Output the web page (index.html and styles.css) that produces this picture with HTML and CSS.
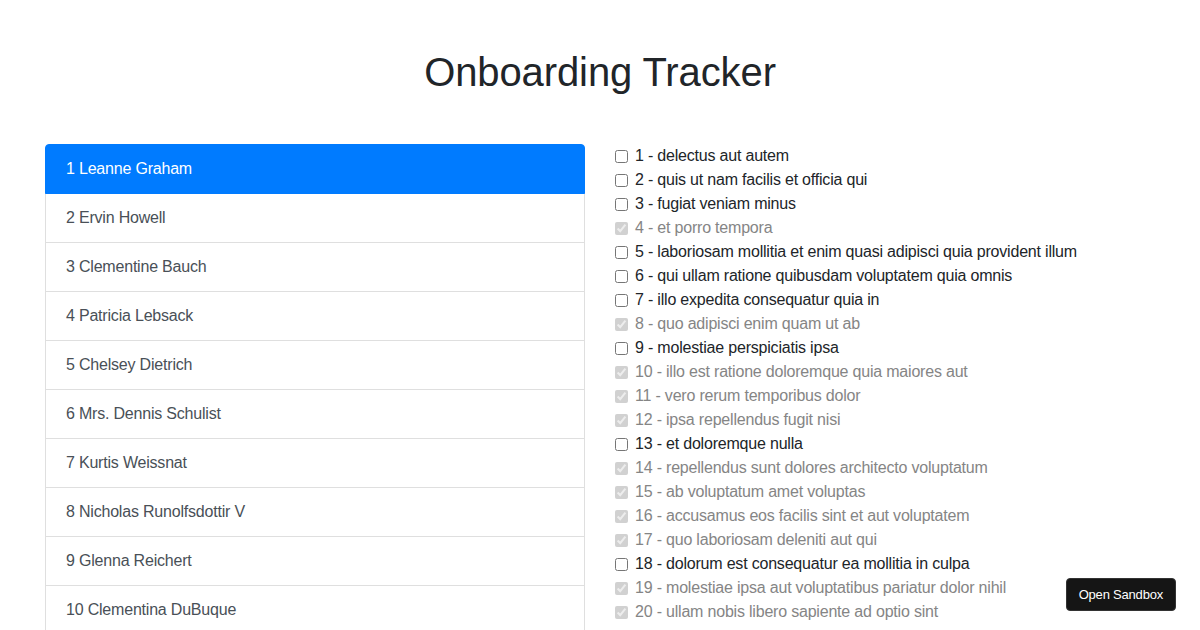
FILE: index.html
```html
<!DOCTYPE html>
<html>
<head>
<meta charset="utf-8">
<link rel="stylesheet" href="styles.css">
</head>
<body>
<div class="container">
  <h1 class="title">Onboarding Tracker</h1>
  <div class="row">
    <div class="col">
      <div class="list-group">
        <div class="item active">1 Leanne Graham</div>
        <div class="item">2 Ervin Howell</div>
        <div class="item">3 Clementine Bauch</div>
        <div class="item">4 Patricia Lebsack</div>
        <div class="item">5 Chelsey Dietrich</div>
        <div class="item">6 Mrs. Dennis Schulist</div>
        <div class="item">7 Kurtis Weissnat</div>
        <div class="item">8 Nicholas Runolfsdottir V</div>
        <div class="item">9 Glenna Reichert</div>
        <div class="item">10 Clementina DuBuque</div>
      </div>
    </div>
    <div class="col">
      <ul class="todos">
        <li><label><input type="checkbox">1 - delectus aut autem</label></li>
        <li><label><input type="checkbox">2 - quis ut nam facilis et officia qui</label></li>
        <li><label><input type="checkbox">3 - fugiat veniam minus</label></li>
        <li class="done"><label><input type="checkbox" checked disabled>4 - et porro tempora</label></li>
        <li><label><input type="checkbox">5 - laboriosam mollitia et enim quasi adipisci quia provident illum</label></li>
        <li><label><input type="checkbox">6 - qui ullam ratione quibusdam voluptatem quia omnis</label></li>
        <li><label><input type="checkbox">7 - illo expedita consequatur quia in</label></li>
        <li class="done"><label><input type="checkbox" checked disabled>8 - quo adipisci enim quam ut ab</label></li>
        <li><label><input type="checkbox">9 - molestiae perspiciatis ipsa</label></li>
        <li class="done"><label><input type="checkbox" checked disabled>10 - illo est ratione doloremque quia maiores aut</label></li>
        <li class="done"><label><input type="checkbox" checked disabled>11 - vero rerum temporibus dolor</label></li>
        <li class="done"><label><input type="checkbox" checked disabled>12 - ipsa repellendus fugit nisi</label></li>
        <li><label><input type="checkbox">13 - et doloremque nulla</label></li>
        <li class="done"><label><input type="checkbox" checked disabled>14 - repellendus sunt dolores architecto voluptatum</label></li>
        <li class="done"><label><input type="checkbox" checked disabled>15 - ab voluptatum amet voluptas</label></li>
        <li class="done"><label><input type="checkbox" checked disabled>16 - accusamus eos facilis sint et aut voluptatem</label></li>
        <li class="done"><label><input type="checkbox" checked disabled>17 - quo laboriosam deleniti aut qui</label></li>
        <li><label><input type="checkbox">18 - dolorum est consequatur ea mollitia in culpa</label></li>
        <li class="done"><label><input type="checkbox" checked disabled>19 - molestiae ipsa aut voluptatibus pariatur dolor nihil</label></li>
        <li class="done"><label><input type="checkbox" checked disabled>20 - ullam nobis libero sapiente ad optio sint</label></li>
      </ul>
    </div>
  </div>
</div>
<a class="sandbox-btn">Open Sandbox</a>
</body>
</html>
```
FILE: styles.css
```css
* { box-sizing: border-box; }
html, body { margin: 0; padding: 0; }
body {
  font-family: "Liberation Sans", Arial, sans-serif;
  font-size: 16px;
  line-height: 1.5;
  color: #212529;
  background: #fff;
  overflow: hidden;
  letter-spacing: -0.2px;
}
.container {
  width: 1140px;
  margin: 0 auto;
  padding: 0 15px;
}
.title {
  margin: 48px 0;
  font-size: 40px;
  font-weight: 400;
  line-height: 1.2;
  text-align: center;
  color: #212529;
  letter-spacing: -0.1px;
}
.row {
  display: flex;
  margin: 0 -15px;
}
.col {
  flex: 0 0 50%;
  max-width: 50%;
  padding: 0 15px;
}
.list-group {
  display: flex;
  flex-direction: column;
}
.item {
  padding: 12px 20px;
  color: #495057;
  background: #fff;
  border: 1px solid rgba(0,0,0,.125);
  margin-bottom: -1px;
}
.item:first-child {
  border-top-left-radius: 4px;
  border-top-right-radius: 4px;
}
.item.active {
  color: #fff;
  background: #007bff;
  border-color: #007bff;
  position: relative;
  z-index: 2;
}
.todos {
  list-style: none;
  margin: 0;
  padding: 0;
}
.todos li {
  height: 24px;
  line-height: 24px;
}
.todos label {
  display: block;
}
.todos input {
  width: 13px;
  height: 13px;
  margin: 0 7px 0 0;
  vertical-align: -2px;
}
.todos li.done label {
  color: #858585;
}
.sandbox-btn {
  position: fixed;
  right: 24px;
  bottom: 19px;
  background: #151515;
  color: #fff;
  font-size: 13px;
  line-height: 13px;
  padding: 9px 12px;
  border-radius: 4px;
  border: 1px solid #333;
}
```
